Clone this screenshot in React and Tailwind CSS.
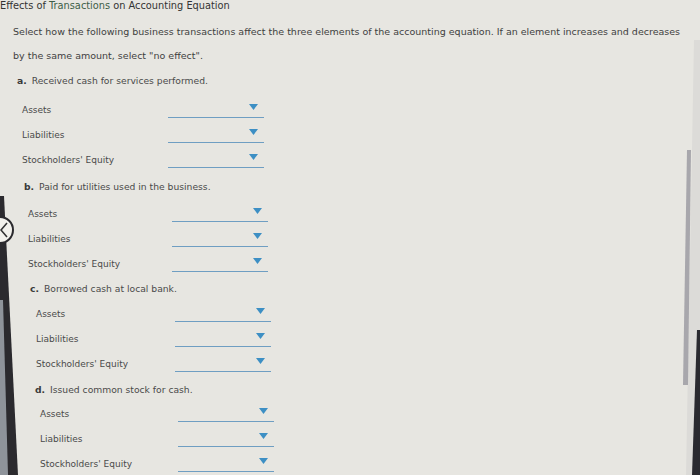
const font = { fontFamily: '"DejaVu Sans", Verdana, sans-serif' }

function Dropdown() {
  return (
    <div className="relative w-[96px] h-[18px] border-b-[1.5px] border-[#6f9ec2]">
      <svg className="absolute right-[6px] top-[4px]" width="9" height="6" viewBox="0 0 9 6">
        <polygon points="0,0 9,0 4.5,6" fill="#3d8fc4" />
      </svg>
    </div>
  )
}

function Row({ label, labelW }) {
  return (
    <div className="flex items-start h-[25px]">
      <div className={`${labelW} text-[9px] leading-[20px] text-[#4a4a4a]`}>{label}</div>
      <Dropdown />
    </div>
  )
}

const rows = ['Assets', 'Liabilities', "Stockholders' Equity"]

function Section({ letter, text, pad, inset, labelW, headMt, rowsMt }) {
  return (
    <div className={pad}>
      <div className={`${headMt} h-[14px] leading-[14px] text-[9.2px] text-[#4a4a4a]`}>
        <span className="font-bold text-[#3a3a3a]">{letter}.</span>
        <span className="ml-[5px]">{text}</span>
      </div>
      <div className={`${rowsMt} ${inset}`}>
        {rows.map((r) => (
          <Row key={r} label={r} labelW={labelW} />
        ))}
      </div>
    </div>
  )
}

export default function App() {
  return (
    <div className="relative w-[700px] h-[475px] overflow-hidden bg-[#e7e6e1]" style={font}>
      <div className="text-[9.8px] leading-[12px] text-[#333]">
        Effects of <span className="text-[#3d5e48]">Transactions</span> on Accounting Equation
      </div>
      <p className="mt-[8px] pl-[13px] pr-[16px] text-[9.5px] leading-[24px] text-[#3f3f3f]">
        Select how the following business transactions affect the three elements of the accounting equation. If an
        element increases and decreases by the same amount, select "no effect".
      </p>
      <Section letter="a" text="Received cash for services performed." pad="pl-[17px]" inset="pl-[5px]" labelW="w-[146px]" headMt="mt-[6px]" rowsMt="mt-[12px]" />
      <Section letter="b" text="Paid for utilities used in the business." pad="pl-[24px]" inset="pl-[4px]" labelW="w-[144px]" headMt="mt-[5px]" rowsMt="mt-[10px]" />
      <Section letter="c" text="Borrowed cash at local bank." pad="pl-[30px]" inset="pl-[6px]" labelW="w-[139px]" headMt="mt-[3px]" rowsMt="mt-[8px]" />
      <Section letter="d" text="Issued common stock for cash." pad="pl-[35px]" inset="pl-[5px]" labelW="w-[138px]" headMt="mt-[4px]" rowsMt="mt-[7px]" />

      {/* photo edges: left bezel, back button, right scrollbar */}
      <svg className="absolute left-0 top-0 pointer-events-none" width="700" height="475" viewBox="0 0 700 475">
        <polygon points="0,196 4,196 18,475 0,475" fill="#2b2a2e" />
        <polygon points="0,300 3,300 8,475 0,475" fill="#8e939a" />
        <circle cx="0" cy="230" r="13" fill="#f2f1ec" stroke="#2b2a2e" strokeWidth="2" />
        <polyline points="7,223 1,230 7,237" fill="none" stroke="#333" strokeWidth="1.6" />
        <polygon points="694,40 700,40 700,475 686,475" fill="#dcdbd8" />
        <polygon points="687,150 691,150 688,385 683,385" fill="#a8a7ac" />
        <polygon points="697,330 700,330 700,475 692,475" fill="#2a2a30" />
      </svg>
    </div>
  )
}
